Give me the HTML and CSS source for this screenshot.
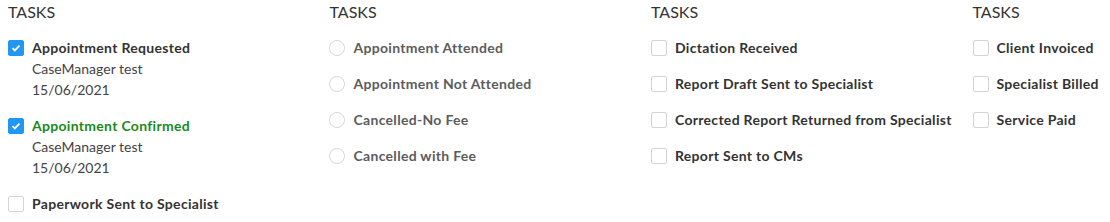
FILE: index.html
```html
<!DOCTYPE html>
<html lang="en">
<head>
  <meta charset="UTF-8">
  <title>Tasks</title>
  <link rel="stylesheet" href="styles.css">
</head>
<body>
  <div class="painel">

    <!-- Coluna 1 -->
    <div class="coluna">
      <h3>TASKS</h3>
      <div class="tarefa">
        <span class="caixa marcada"><svg viewBox="0 0 16 16"><path d="M4 8.2l2.6 2.6L12 5.4" fill="none" stroke="#fff" stroke-width="2"/></svg></span>
        <div>
          <div class="nome">Appointment Requested</div>
          <div class="info">CaseManager test</div>
          <div class="info">15/06/2021</div>
        </div>
      </div>
      <div class="tarefa">
        <span class="caixa marcada"><svg viewBox="0 0 16 16"><path d="M4 8.2l2.6 2.6L12 5.4" fill="none" stroke="#fff" stroke-width="2"/></svg></span>
        <div>
          <div class="nome verde">Appointment Confirmed</div>
          <div class="info">CaseManager test</div>
          <div class="info">15/06/2021</div>
        </div>
      </div>
      <div class="tarefa">
        <span class="caixa"></span>
        <div class="nome">Paperwork Sent to Specialist</div>
      </div>
    </div>

    <!-- Coluna 2 -->
    <div class="coluna">
      <h3>TASKS</h3>
      <div class="tarefa">
        <span class="radio"></span>
        <div class="nome cinza">Appointment Attended</div>
      </div>
      <div class="tarefa">
        <span class="radio"></span>
        <div class="nome cinza">Appointment Not Attended</div>
      </div>
      <div class="tarefa">
        <span class="radio"></span>
        <div class="nome cinza">Cancelled-No Fee</div>
      </div>
      <div class="tarefa">
        <span class="radio"></span>
        <div class="nome cinza">Cancelled with Fee</div>
      </div>
    </div>

    <!-- Coluna 3 -->
    <div class="coluna">
      <h3>TASKS</h3>
      <div class="tarefa">
        <span class="caixa"></span>
        <div class="nome">Dictation Received</div>
      </div>
      <div class="tarefa">
        <span class="caixa"></span>
        <div class="nome">Report Draft Sent to Specialist</div>
      </div>
      <div class="tarefa">
        <span class="caixa"></span>
        <div class="nome">Corrected Report Returned from Specialist</div>
      </div>
      <div class="tarefa">
        <span class="caixa"></span>
        <div class="nome">Report Sent to CMs</div>
      </div>
    </div>

    <!-- Coluna 4 -->
    <div class="coluna">
      <h3>TASKS</h3>
      <div class="tarefa">
        <span class="caixa"></span>
        <div class="nome">Client Invoiced</div>
      </div>
      <div class="tarefa">
        <span class="caixa"></span>
        <div class="nome">Specialist Billed</div>
      </div>
      <div class="tarefa">
        <span class="caixa"></span>
        <div class="nome">Service Paid</div>
      </div>
    </div>

  </div>
</body>
</html>
```

FILE: styles.css
```css
/* Estilos gerais */
body {
  margin: 0;
  padding: 2px 8px 0;
  font-family: Lato, "Open Sans", sans-serif;
  background: #fff;
  color: #333;
  overflow: hidden;
}

.painel {
  display: flex;
}

.coluna {
  flex: 0 0 321.5px;
}

.coluna:last-child {
  flex: 1 1 auto;
  min-width: 0;
}

h3 {
  margin: 0 0 16px;
  font-size: 16px;
  font-weight: normal;
  line-height: 20px;
  color: #333;
}

.tarefa {
  display: flex;
  align-items: flex-start;
  gap: 8px;
  padding-bottom: 16px;
}

.nome {
  font-size: 14px;
  font-weight: bold;
  letter-spacing: 0.3px;
  line-height: 20px;
  color: #333;
  white-space: nowrap;
}

.verde {
  color: #1a8a1a;
}

.cinza {
  color: #5c5c5c;
}

.info {
  font-size: 14px;
  line-height: 21px;
  color: #444;
}

/* Caixas de selecao */
.caixa {
  width: 16px;
  height: 16px;
  margin-top: 2px;
  box-sizing: border-box;
  border: 1px solid #d4d4d4;
  border-radius: 2px;
  flex-shrink: 0;
}

.caixa.marcada {
  background: #2196f3;
  border-color: #2196f3;
}

.caixa svg {
  display: block;
  width: 14px;
  height: 14px;
}

.radio {
  width: 16px;
  height: 16px;
  margin-top: 2px;
  margin-left: -1px;
  margin-right: 1px;
  box-sizing: border-box;
  border: 1px solid #d8d8d8;
  border-radius: 50%;
  flex-shrink: 0;
}
```
